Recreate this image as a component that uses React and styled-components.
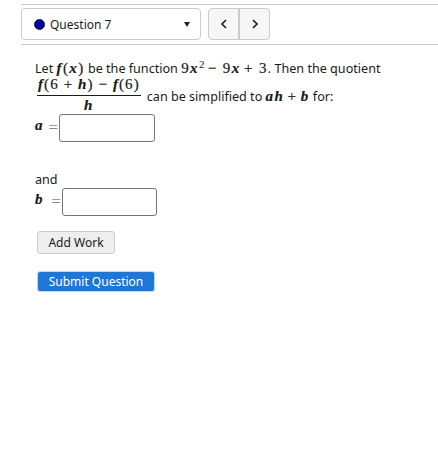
import React from "react";
import styled, { createGlobalStyle } from "styled-components";

const GlobalStyle = createGlobalStyle`
  body {
    margin: 0;
    background: #fff;
    color: #1a1a1a;
    font-family: "Noto Sans", "Open Sans", sans-serif;
    font-size: 12.6px;
  }
`;

const Page = styled.div`
  width: 438px;
  height: 450px;
  padding: 4px 0 0 21px;
  box-sizing: border-box;
  overflow: hidden;
`;

const Toolbar = styled.div`
  display: flex;
  gap: 7px;
  height: 41px;
  padding: 3px 0 4px;
  box-sizing: border-box;
  border-top: 1px solid #ccc;
  border-bottom: 1px solid #ccc;
  font-size: 12px;
`;

const QuestionSelect = styled.div`
  width: 180px;
  display: flex;
  align-items: center;
  box-sizing: border-box;
  padding: 0 7px 0 12px;
  border: 1px solid #ccc;
  border-radius: 4px;
  background: #fff;
`;

const Dot = styled.span`
  width: 11px;
  height: 11px;
  border-radius: 50%;
  background: #0000a8;
  border: 1px solid #222;
  box-sizing: border-box;
  margin-right: 5px;
`;

const Caret = styled.span`
  margin-left: auto;
  margin-right: 3px;
  width: 0;
  height: 0;
  border-left: 3.5px solid transparent;
  border-right: 3.5px solid transparent;
  border-top: 5px solid #222;
`;

const NavGroup = styled.div`
  display: flex;
  width: 62px;
  border: 1px solid #ccc;
  border-radius: 4px;
  background: #f7f7f7;
  box-sizing: border-box;
`;

const NavButton = styled.div`
  flex: 1;
  display: flex;
  align-items: center;
  justify-content: center;
  & + & {
    border-left: 2px solid #ccc;
  }
`;

const Body = styled.div`
  padding: 14px 0 0 14px;
`;

const Line = styled.div`
  white-space: nowrap;
  height: 20px;
  line-height: 20px;
`;

const FractionLine = styled.div`
  display: flex;
  align-items: center;
  height: 35px;
  white-space: nowrap;
`;

const Fraction = styled.span`
  display: inline-flex;
  flex-direction: column;
  align-items: center;
  margin: 0 6px 0 2px;
`;

const M = styled.span`
  font-family: "Liberation Serif", serif;
  font-size: 15px;
  line-height: 1;
  font-style: ${(p) => (p.$upright ? "normal" : "italic")};
  font-weight: ${(p) => (p.$upright ? 400 : 700)};
  letter-spacing: 1.4px;
  -webkit-text-stroke: 0.2px #1a1a1a;
`;

const Numerator = styled.span`
  padding: 0 1px 2px;
  line-height: 16px;
  border-bottom: 1px solid #1a1a1a;
  ${M} {
    letter-spacing: 1.1px;
  }
`;

const Denominator = styled.span`
  line-height: 20px;
`;

const Sup = styled.sup`
  font-family: "Liberation Serif", serif;
  font-size: 11px;
  line-height: 0;
`;

const AnswerRow = styled.div`
  display: flex;
  align-items: center;
  height: 28px;
`;

const AnswerLabel = styled.span`
  width: ${(p) => p.$width}px;
  display: flex;
  justify-content: space-between;
  padding: 0 1px 0 0;
  box-sizing: border-box;
`;

const Equals = styled.span`
  font-family: "Liberation Serif", serif;
  font-size: 17px;
  color: #888;
`;

const AnswerInput = styled.input`
  width: ${(p) => p.$width}px;
  height: 28px;
  box-sizing: border-box;
  border: 1px solid #777;
  border-radius: 3px;
  background: #fff;
  padding: 0;
`;

const And = styled.div`
  margin-top: 29px;
  line-height: 17px;
`;

const WorkButton = styled.button`
  display: block;
  width: 78px;
  height: 23px;
  margin: 15px 0 0 2px;
  padding: 0;
  border: 1px solid #ccc;
  border-radius: 3px;
  background: #eee;
  color: #1a1a1a;
  font: inherit;
  font-size: 12px;
`;

const SubmitButton = styled.button`
  display: block;
  width: 118px;
  height: 21px;
  margin: 17px 0 0 2px;
  padding: 0;
  border: 1px solid #c4d8ef;
  border-radius: 3px;
  background: #1e76d6;
  color: #fff;
  font: inherit;
  font-size: 12px;
`;

const Chevron = ({ points }) => (
  <svg width="10" height="12" viewBox="0 0 10 12">
    <polyline points={points} fill="none" stroke="#1a1a1a" strokeWidth="1.6" />
  </svg>
);

export default function App() {
  return (
    <Page>
      <GlobalStyle />
      <Toolbar>
        <QuestionSelect>
          <Dot />
          Question 7
          <Caret />
        </QuestionSelect>
        <NavGroup>
          <NavButton>
            <Chevron points="7,2 3,6 7,10" />
          </NavButton>
          <NavButton>
            <Chevron points="3,2 7,6 3,10" />
          </NavButton>
        </NavGroup>
      </Toolbar>
      <Body>
        <Line>
          Let <M>f</M>
          <M $upright>(</M>
          <M>x</M>
          <M $upright>)</M> be the function <M $upright>9</M>
          <M>x</M>
          <Sup>2</Sup> <M $upright>− 9</M>
          <M>x</M> <M $upright>+ 3</M>. Then the quotient
        </Line>
        <FractionLine>
          <Fraction>
            <Numerator>
              <M>f</M>
              <M $upright>(6 + </M>
              <M>h</M>
              <M $upright>) − </M>
              <M>f</M>
              <M $upright>(6)</M>
            </Numerator>
            <Denominator>
              <M>h</M>
            </Denominator>
          </Fraction>
          can be simplified to&nbsp;
          <M>ah</M>&nbsp;<M $upright>+</M>&nbsp;<M>b</M>&nbsp;for:
        </FractionLine>
        <AnswerRow>
          <AnswerLabel $width={24}>
            <M>a</M>
            <Equals>=</Equals>
          </AnswerLabel>
          <AnswerInput $width={96} />
        </AnswerRow>
        <And>and</And>
        <AnswerRow>
          <AnswerLabel $width={27}>
            <M>b</M>
            <Equals>=</Equals>
          </AnswerLabel>
          <AnswerInput $width={95} />
        </AnswerRow>
        <WorkButton>Add Work</WorkButton>
        <SubmitButton>Submit Question</SubmitButton>
      </Body>
    </Page>
  );
}
